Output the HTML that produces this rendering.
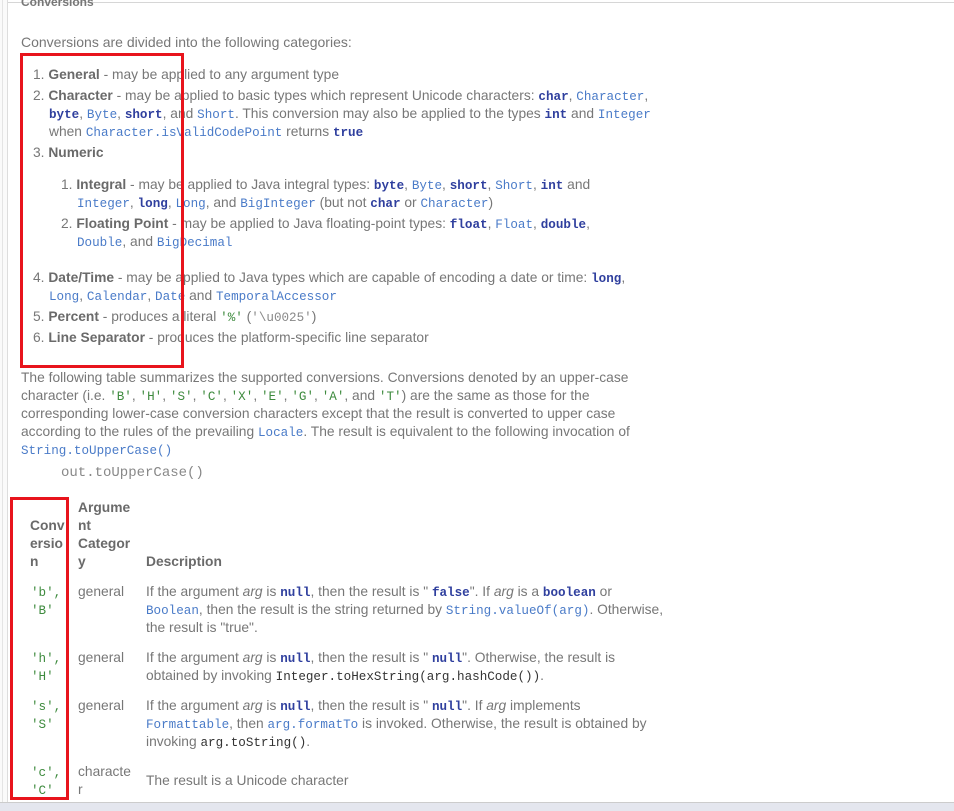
<!DOCTYPE html>
<html><head><meta charset="utf-8"><style>
*{margin:0;padding:0;box-sizing:border-box}
body{width:954px;height:811px;background:#fff;position:relative;overflow:hidden;font-family:"Liberation Sans",sans-serif;font-size:13.8px;color:#777}
.l{position:absolute;white-space:nowrap;line-height:18px}
b{color:#6a6a6a;font-weight:bold}
.c{font-family:"Liberation Mono",monospace;font-size:12.6px;color:#4a7bc8}
.k{font-family:"Liberation Mono",monospace;font-size:12.6px;color:#2f3f9e;font-weight:bold}
.g{font-family:"Liberation Mono",monospace;font-size:12.6px;color:#3d8a3d}
.d{font-family:"Liberation Mono",monospace;font-size:12.6px;color:#333}
.m{font-family:"Liberation Mono",monospace;font-size:12.6px;color:#888}
.h{font-weight:bold;color:#6a6a6a}
i{font-style:italic}
.box{position:absolute;border:3px solid #e8141c}
</style></head><body>
<div style="position:absolute;left:0;top:0;width:8px;height:803px;background:#fafafa;border-right:1px solid #ddd"></div>
<div style="position:absolute;left:2px;top:0;width:1px;height:803px;background:#e4e4e4"></div>
<div style="position:absolute;left:8px;top:2px;width:946px;height:1px;background:#d6d6d6"></div>
<div style="position:absolute;left:0;top:802px;width:954px;height:9px;background:#e4e6ee;border-top:1px solid #ccc"></div>

<div class="l" style="left:21px;top:-7px;font-weight:bold;font-size:12px;color:#777">Conversions</div>
<div class="l" style="left:21px;top:33px;font-size:14px">Conversions are divided into the following categories:</div>

<div class="l" style="left:33px;top:66px">1. <b>General</b> - may be applied to any argument type</div>
<div class="l" style="left:33px;top:87px">2. <b>Character</b> - may be applied to basic types which represent Unicode characters: <span class="k">char</span>, <span class="c">Character</span>,</div>
<div class="l" style="left:49px;top:105px"><span class="k">byte</span>, <span class="c">Byte</span>, <span class="k">short</span>, and <span class="c">Short</span>. This conversion may also be applied to the types <span class="k">int</span> and <span class="c">Integer</span></div>
<div class="l" style="left:49px;top:123px">when <span class="c">Character.isValidCodePoint</span> returns <span class="k">true</span></div>
<div class="l" style="left:33px;top:144px">3. <b>Numeric</b></div>
<div class="l" style="left:61px;top:176px">1. <b>Integral</b> - may be applied to Java integral types: <span class="k">byte</span>, <span class="c">Byte</span>, <span class="k">short</span>, <span class="c">Short</span>, <span class="k">int</span> and</div>
<div class="l" style="left:77px;top:194px"><span class="c">Integer</span>, <span class="k">long</span>, <span class="c">Long</span>, and <span class="c">BigInteger</span> (but not <span class="k">char</span> or <span class="c">Character</span>)</div>
<div class="l" style="left:61px;top:215px">2. <b>Floating Point</b> - may be applied to Java floating-point types: <span class="k">float</span>, <span class="c">Float</span>, <span class="k">double</span>,</div>
<div class="l" style="left:77px;top:233px"><span class="c">Double</span>, and <span class="c">BigDecimal</span></div>
<div class="l" style="left:33px;top:269px">4. <b>Date/Time</b> - may be applied to Java types which are capable of encoding a date or time: <span class="k">long</span>,</div>
<div class="l" style="left:49px;top:287px"><span class="c">Long</span>, <span class="c">Calendar</span>, <span class="c">Date</span> and <span class="c">TemporalAccessor</span></div>
<div class="l" style="left:33px;top:308px">5. <b>Percent</b> - produces a literal <span class="g">'%'</span> (<span class="m">'\u0025'</span>)</div>
<div class="l" style="left:33px;top:329px">6. <b>Line Separator</b> - produces the platform-specific line separator</div>

<div class="l" style="left:21px;top:369px">The following table summarizes the supported conversions. Conversions denoted by an upper-case</div>
<div class="l" style="left:21px;top:387px">character (i.e. <span class="g">'B'</span>, <span class="g">'H'</span>, <span class="g">'S'</span>, <span class="g">'C'</span>, <span class="g">'X'</span>, <span class="g">'E'</span>, <span class="g">'G'</span>, <span class="g">'A'</span>, and <span class="g">'T'</span>) are the same as those for the</div>
<div class="l" style="left:21px;top:405px">corresponding lower-case conversion characters except that the result is converted to upper case</div>
<div class="l" style="left:21px;top:423px">according to the rules of the prevailing <span class="c">Locale</span>. The result is equivalent to the following invocation of</div>
<div class="l" style="left:21px;top:441px"><span class="c">String.toUpperCase()</span></div>
<div class="l" style="left:61px;top:464px;font-family:'Liberation Mono',monospace;font-size:14px;color:#888">out.toUpperCase()</div>

<div class="l h" style="left:30px;top:517px">Conv</div>
<div class="l h" style="left:30px;top:535px">ersio</div>
<div class="l h" style="left:30px;top:553px">n</div>
<div class="l h" style="left:78px;top:499px">Argume</div>
<div class="l h" style="left:78px;top:517px">nt</div>
<div class="l h" style="left:78px;top:535px">Categor</div>
<div class="l h" style="left:78px;top:553px">y</div>
<div class="l h" style="left:146px;top:553px">Description</div>

<div class="l" style="left:31px;top:583px"><span class="g">'b',</span></div>
<div class="l" style="left:31px;top:601px"><span class="g">'B'</span></div>
<div class="l" style="left:78px;top:583px">general</div>
<div class="l" style="left:146px;top:583px">If the argument <i>arg</i> is <span class="k">null</span>, then the result is " <span class="k">false</span>". If <i>arg</i> is a <span class="k">boolean</span> or</div>
<div class="l" style="left:146px;top:601px"><span class="c">Boolean</span>, then the result is the string returned by <span class="c">String.valueOf(arg)</span>. Otherwise,</div>
<div class="l" style="left:146px;top:619px">the result is "true".</div>

<div class="l" style="left:31px;top:649px"><span class="g">'h',</span></div>
<div class="l" style="left:31px;top:667px"><span class="g">'H'</span></div>
<div class="l" style="left:78px;top:649px">general</div>
<div class="l" style="left:146px;top:649px">If the argument <i>arg</i> is <span class="k">null</span>, then the result is " <span class="k">null</span>". Otherwise, the result is</div>
<div class="l" style="left:146px;top:667px">obtained by invoking <span class="d">Integer.toHexString(arg.hashCode())</span>.</div>

<div class="l" style="left:31px;top:697px"><span class="g">'s',</span></div>
<div class="l" style="left:31px;top:715px"><span class="g">'S'</span></div>
<div class="l" style="left:78px;top:697px">general</div>
<div class="l" style="left:146px;top:697px">If the argument <i>arg</i> is <span class="k">null</span>, then the result is " <span class="k">null</span>". If <i>arg</i> implements</div>
<div class="l" style="left:146px;top:715px"><span class="c">Formattable</span>, then <span class="c">arg.formatTo</span> is invoked. Otherwise, the result is obtained by</div>
<div class="l" style="left:146px;top:733px">invoking <span class="d">arg.toString()</span>.</div>

<div class="l" style="left:31px;top:763px"><span class="g">'c',</span></div>
<div class="l" style="left:31px;top:781px"><span class="g">'C'</span></div>
<div class="l" style="left:78px;top:763px">characte</div>
<div class="l" style="left:78px;top:781px">r</div>
<div class="l" style="left:146px;top:772px">The result is a Unicode character</div>

<div class="box" style="left:20px;top:53px;width:164px;height:315px"></div>
<div class="box" style="left:10px;top:497px;width:59px;height:303px"></div>
</body></html>
